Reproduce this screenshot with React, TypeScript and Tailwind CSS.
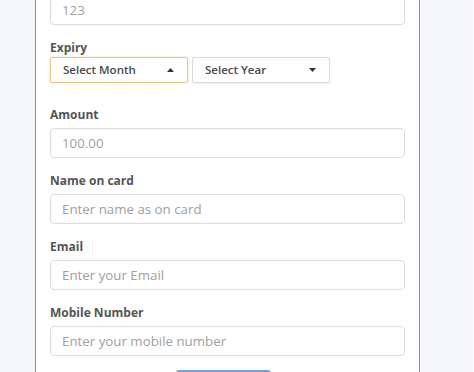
import React from "react";

const font = { fontFamily: '"Open Sans", "Noto Sans", Arial, sans-serif' };

function Label({ children, className = "" }: { children: React.ReactNode; className?: string }) {
  return <div className={`text-[12px] font-bold leading-[18px] text-[#555] ${className}`}>{children}</div>;
}

function TextInput({ placeholder, className = "mt-[4px]" }: { placeholder: string; className?: string }) {
  return (
    <input
      placeholder={placeholder}
      className={`block h-[30px] w-full rounded-[4px] border border-[#dcdcdc] bg-white px-[11px] text-[13.3px] text-[#555] outline-none placeholder:text-[#a0a0a0] ${className}`}
    />
  );
}

function Field({ label, placeholder }: { label: string; placeholder: string }) {
  return (
    <div className="mt-[14px]">
      <Label>{label}</Label>
      <TextInput placeholder={placeholder} />
    </div>
  );
}

function SelectBox({ text, up, active }: { text: string; up?: boolean; active?: boolean }) {
  return (
    <div
      className={`flex h-[26px] w-[138px] items-center justify-between rounded-[2px] bg-white pl-[12px] pr-[13px] text-[11.5px] font-semibold text-[#4a4a4a] ${
        active ? "border border-[#e6c88c] shadow-[0_0_2px_rgba(230,190,110,0.6)]" : "border border-[#dadada] shadow-[0_1px_1px_rgba(0,0,0,0.05)]"
      }`}
    >
      <span>{text}</span>
      <svg width="7" height="4" viewBox="0 0 7 4" className="text-[#333]">
        {up ? <path d="M0 4 L3.5 0 L7 4 Z" fill="currentColor" /> : <path d="M0 0 L7 0 L3.5 4 Z" fill="currentColor" />}
      </svg>
    </div>
  );
}

export default function App() {
  return (
    <div className="flex h-[372px] w-[474px] overflow-hidden bg-white" style={font}>
      <div className="flex h-full w-[473px] bg-[#f4f6fa]">
        <div className="ml-[35px] h-full w-[385px] border-l border-r border-solid border-[#5b95f0] bg-white px-[14px]">
          <TextInput placeholder="123" className="-mt-[5px]" />

          <div className="mt-[14px]">
            <Label className="leading-[17px]">Expiry</Label>
            <div className="flex gap-[4px]">
              <SelectBox text="Select Month" up active />
              <SelectBox text="Select Year" />
            </div>
          </div>

          <div className="mt-[23px]">
            <Label>Amount</Label>
            <TextInput placeholder="100.00" />
          </div>

          <Field label="Name on card" placeholder="Enter name as on card" />
          <Field label="Email" placeholder="Enter your Email" />
          <Field label="Mobile Number" placeholder="Enter your mobile number" />

          <div className="mt-[14px] flex justify-center pr-[8px]">
            <button aria-label="Pay" className="h-[30px] w-[95px] rounded-[3px] bg-[#6ea1ee]" />
          </div>
        </div>
      </div>
    </div>
  );
}
